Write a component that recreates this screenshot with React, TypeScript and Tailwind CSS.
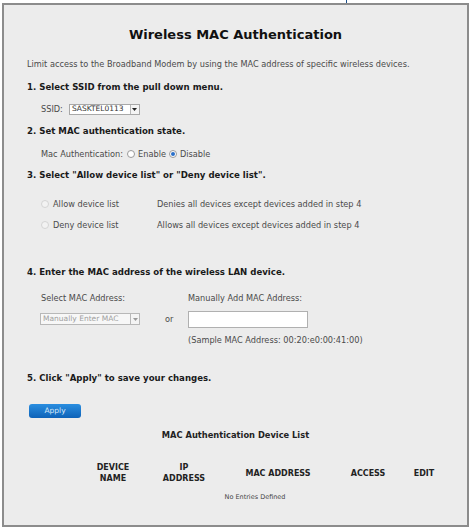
import React from "react";

const Radio = ({ checked = false, disabled = false }: { checked?: boolean; disabled?: boolean }) => (
  <span
    className={
      "inline-flex items-center justify-center w-[8px] h-[8px] rounded-full border " +
      (disabled ? "border-[#d4d4d4] bg-[#f2f2f2]" : "border-[#9a9a9a] bg-white")
    }
  >
    {checked && <span className="block w-[4px] h-[4px] rounded-full bg-[#2a6fc9]" />}
  </span>
);

const Arrow = ({ light = false }: { light?: boolean }) => (
  <span className="flex items-center justify-center w-[9px] h-full border-l border-[#b8b8b8] bg-[#f4f4f4]">
    <svg width="5" height="3" viewBox="0 0 5 3">
      <path d="M0 0 L5 0 L2.5 3 Z" fill={light ? "#999" : "#222"} />
    </svg>
  </span>
);

export default function App() {
  const h = "h-[14px] flex items-center font-bold text-[8.6px] text-[#1a1a1a]";
  const t = "text-[8.2px] text-[#4a4a4a]";
  return (
    <div className="relative w-[471px] h-[530px] bg-white pt-[3px] pl-[2px]" style={{ fontFamily: '"DejaVu Sans", Verdana, sans-serif' }}>
      <span className="absolute left-[346px] top-0 w-[1px] h-[3px] bg-[#1b4f8a]" />
      <div className="w-[467px] h-[524px] border-2 border-[#8c8c8c] bg-[#ececec] pl-[23px] pr-[10px]">
        <div className="pt-[20px] h-[20px] box-content flex items-center justify-center font-bold text-[13px] text-[#111] pr-[13px]">
          Wireless MAC Authentication
        </div>
        <div className={"mt-[12px] h-[14px] flex items-center " + t}>
          Limit access to the Broadband Modem by using the MAC address of specific wireless devices.
        </div>
        <div className={"mt-[9px] " + h}>1. Select SSID from the pull down menu.</div>
        <div className={"mt-[8px] h-[14px] flex items-center pl-[14px] " + t}>
          <span>SSID:</span>
          <span className="ml-[6px] flex items-center h-[11px] w-[71px] border border-[#a8a8a8] bg-white">
            <span className="flex-1 pl-[2px] text-[7.5px] text-[#333] leading-none">SASKTEL0113</span>
            <Arrow />
          </span>
        </div>
        <div className={"mt-[8px] " + h}>2. Set MAC authentication state.</div>
        <div className={"mt-[9px] h-[14px] flex items-center pl-[14px] " + t}>
          <span>Mac Authentication:</span>
          <span className="ml-[4px] mr-[3px] flex"><Radio /></span>
          <span>Enable</span>
          <span className="ml-[3px] mr-[3px] flex"><Radio checked /></span>
          <span>Disable</span>
        </div>
        <div className={"mt-[7px] " + h}>3. Select "Allow device list" or "Deny device list".</div>
        <div className={"mt-[15px] h-[14px] flex items-center pl-[14px] " + t}>
          <span className="flex"><Radio disabled /></span>
          <span className="ml-[4px] w-[104px]">Allow device list</span>
          <span>Denies all devices except devices added in step 4</span>
        </div>
        <div className={"mt-[7px] h-[14px] flex items-center pl-[14px] " + t}>
          <span className="flex"><Radio disabled /></span>
          <span className="ml-[4px] w-[104px]">Deny device list</span>
          <span>Allows all devices except devices added in step 4</span>
        </div>
        <div className={"mt-[33px] " + h}>4. Enter the MAC address of the wireless LAN device.</div>
        <div className={"mt-[12px] h-[14px] flex items-center pl-[14px] " + t}>
          <span className="w-[147px]">Select MAC Address:</span>
          <span>Manually Add MAC Address:</span>
        </div>
        <div className={"mt-[5px] h-[18px] flex items-center pl-[13px] " + t}>
          <span className="flex items-center h-[12px] w-[100px] border border-[#b8b8b8] bg-[#f7f7f7]">
            <span className="flex-1 pl-[2px] text-[7.5px] text-[#a0a0a0] leading-none">Manually Enter MAC</span>
            <Arrow light />
          </span>
          <span className="ml-[25px] w-[23px]">or</span>
          <span className="h-[17px] w-[120px] border border-[#b0b0b0] bg-white" />
        </div>
        <div className={"mt-[5px] h-[14px] flex items-center pl-[161px] " + t}>
          (Sample MAC Address: 00:20:e0:00:41:00)
        </div>
        <div className={"mt-[24px] " + h}>5. Click "Apply" to save your changes.</div>
        <div className="mt-[19px] flex pl-[2px]">
          <span className="w-[52px] h-[14px] rounded-[3px] bg-gradient-to-b from-[#2a8ee0] to-[#0d62b8] flex items-center justify-center text-[7.5px] text-[#d8e8f8]">
            Apply
          </span>
        </div>
        <div className="mt-[10px] h-[14px] flex items-center justify-center font-bold text-[8.3px] text-[#222] pr-[13px]">
          MAC Authentication Device List
        </div>
        <div className="mt-[20px] h-[23px] relative font-bold text-[8px] text-[#222] leading-[11px]">
          <span className="absolute left-[60px] w-[52px] text-center top-0">DEVICE<br />NAME</span>
          <span className="absolute left-[131px] w-[52px] text-center top-0">IP<br />ADDRESS</span>
          <span className="absolute left-[205px] w-[92px] top-[6px] text-center">MAC ADDRESS</span>
          <span className="absolute left-[311px] w-[60px] top-[6px] text-center">ACCESS</span>
          <span className="absolute left-[379px] w-[36px] top-[6px] text-center">EDIT</span>
        </div>
        <div className="mt-[7px] h-[12px] flex items-center justify-center text-[6.5px] text-[#444] pl-[26px]">
          No Entries Defined
        </div>
      </div>
    </div>
  );
}
